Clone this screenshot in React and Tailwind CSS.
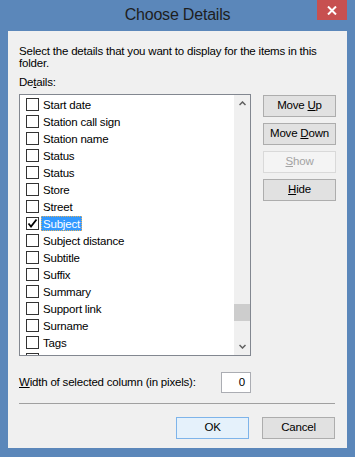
import React from "react";

const items = [
  { label: "Start date" },
  { label: "Station call sign" },
  { label: "Station name" },
  { label: "Status" },
  { label: "Status" },
  { label: "Store" },
  { label: "Street" },
  { label: "Subject", checked: true, selected: true },
  { label: "Subject distance" },
  { label: "Subtitle" },
  { label: "Suffix" },
  { label: "Summary" },
  { label: "Support link" },
  { label: "Surname" },
  { label: "Tags" },
  { label: "" },
];

const Check = ({ checked }) => (
  <div className="mt-[1px] w-[13px] h-[13px] shrink-0 border border-[#333333] bg-white flex items-center justify-center">
    {checked && (
      <svg width="11" height="11" viewBox="0 0 11 11">
        <path d="M1.5 5.5 L4 8.5 L9.5 1.5" fill="none" stroke="#000" strokeWidth="1.8" />
      </svg>
    )}
  </div>
);

const Button = ({ children, disabled, primary }) => (
  <div
    className={`w-[73px] h-[22px] flex items-center justify-center border ${
      disabled
        ? "bg-[#f4f4f4] border-[#d9d9d9] text-[#a3a3a3]"
        : primary
        ? "bg-[#e5f1fb] border-[#7eb4ea] text-black"
        : "bg-[#e1e1e1] border-[#adadad] text-black"
    }`}
  >
    <span>{children}</span>
  </div>
);

const App = () => {
  return (
    <div
      className="w-[355px] h-[457px] bg-[#5b87ba] flex flex-col"
      style={{ fontFamily: '"Liberation Sans", Arial, sans-serif' }}
    >
      {/* title bar */}
      <div className="relative h-[31px] flex items-center justify-center">
        <span className="text-[16px] text-[#1e1e1e] tracking-[-0.2px] -mt-[1px]">Choose Details</span>
        <div className="absolute top-0 right-[8px] w-[30px] h-[20px] bg-[#c75050] flex items-center justify-center">
          <svg width="10" height="9" viewBox="0 0 10 9">
            <path d="M1 0.5 L9 8.5 M9 0.5 L1 8.5" stroke="#fff" strokeWidth="2" />
          </svg>
        </div>
      </div>

      {/* client area */}
      <div className="mx-[8px] w-[339px] h-[417px] bg-[#f0f0f0] pl-[11px] pr-[8px] pt-[14px] text-[11.5px] tracking-[-0.2px] text-black flex flex-col">
        <p className="leading-[12px]">
          Select the details that you want to display for the items in this folder.
        </p>
        <div className="mt-[7px] leading-[13px]">
          De<span className="underline">t</span>ails:
        </div>

        <div className="mt-[5px] flex gap-[12px]">
          {/* list */}
          <div className="w-[232px] h-[262px] border border-[#828790] bg-white flex overflow-hidden">
            <div className="flex-1 pt-[2px] pl-[6px] overflow-hidden">
              {items.map((it, i) => (
                <div key={i} className="h-[17px] flex items-start">
                  <Check checked={it.checked} />
                  {it.label && (
                    <span
                      className={`ml-[2px] h-[15px] leading-[16px] px-[2px] ${
                        it.selected
                          ? "bg-[#3399ff] text-white outline outline-1 outline-dotted outline-[#e0b060] -outline-offset-1"
                          : ""
                      }`}
                    >
                      {it.label}
                    </span>
                  )}
                </div>
              ))}
            </div>
            {/* scrollbar */}
            <div className="w-[16px] bg-[#f0f0f0] flex flex-col">
              <div className="h-[17px] flex items-center justify-center">
                <svg width="7" height="5" viewBox="0 0 7 5">
                  <path d="M0.5 4 L3.5 1 L6.5 4" fill="none" stroke="#606060" strokeWidth="1.5" />
                </svg>
              </div>
              <div className="flex-1 flex flex-col">
                <div className="h-[192px]" />
                <div className="h-[17px] bg-[#cdcdcd]" />
              </div>
              <div className="h-[17px] flex items-center justify-center">
                <svg width="7" height="5" viewBox="0 0 7 5">
                  <path d="M0.5 1 L3.5 4 L6.5 1" fill="none" stroke="#606060" strokeWidth="1.5" />
                </svg>
              </div>
            </div>
          </div>

          {/* side buttons */}
          <div className="flex flex-col gap-[6px] pt-[1px]">
            <Button>
              Move <span className="underline">U</span>p
            </Button>
            <Button>
              Move <span className="underline">D</span>own
            </Button>
            <Button disabled>
              <span className="underline">S</span>how
            </Button>
            <Button>
              <span className="underline">H</span>ide
            </Button>
          </div>
        </div>

        {/* width row */}
        <div className="mt-[16px] w-[232px] flex items-center justify-between">
          <span>
            <span className="underline">W</span>idth of selected column (in pixels):
          </span>
          <div className="w-[30px] h-[21px] border border-[#abadb3] bg-white flex items-center justify-end pr-[5px]">
            0
          </div>
        </div>

        <div className="mt-[10px] h-px w-[316px] bg-[#a0a0a0]" />

        <div className="mt-[13px] flex justify-end gap-[13px] pr-[4px]">
          <Button primary>OK</Button>
          <Button>Cancel</Button>
        </div>
      </div>
    </div>
  );
};

export default App;
